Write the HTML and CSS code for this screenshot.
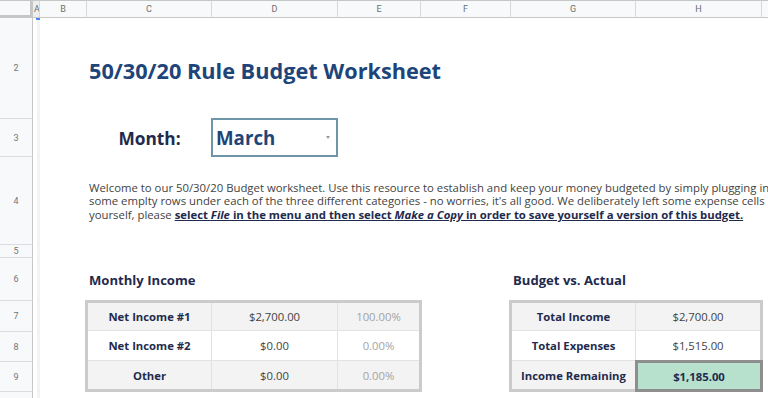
FILE: index.html
```html
<!DOCTYPE html>
<html lang="en">
<head>
<meta charset="utf-8">
<title>50/30/20 Rule Budget Worksheet</title>
<link rel="stylesheet" href="styles.css">
</head>
<body>
<div class="sheet">
  <div class="corner"></div>
  <div class="ch ch-a">A</div>
  <div class="ch">B</div>
  <div class="ch">C</div>
  <div class="ch">D</div>
  <div class="ch">E</div>
  <div class="ch">F</div>
  <div class="ch">G</div>
  <div class="ch">H</div>
  <div class="ch"></div>

  <div class="rh r2">2</div>
  <div class="rh r3">3</div>
  <div class="rh r4">4</div>
  <div class="rh r5">5</div>
  <div class="rh r6">6</div>
  <div class="rh r7">7</div>
  <div class="rh r8">8</div>
  <div class="rh r9">9</div>
  <div class="rh r10"></div>

  <div class="col-a"></div>

  <h1 class="title">50/30/20 Rule Budget Worksheet</h1>

  <div class="month-label">Month:</div>
  <div class="dropdown"><span class="dropdown-value">March</span><span class="caret"></span></div>

  <p class="intro">Welcome to our 50/30/20 Budget worksheet. Use this resource to establish and keep your money budgeted by simply plugging in<br>some emplty rows under each of the three different categories - no worries, it's all good. We deliberately left some expense cells<br>yourself, please <strong class="cta">select <em>File</em> in the menu and then select <em>Make a Copy</em> in order to save yourself a version of this budget.</strong></p>

  <h2 class="sect sect-income">Monthly Income</h2>
  <h2 class="sect sect-budget">Budget vs. Actual</h2>

  <div class="tbl tbl-income">
    <div class="cell lbl shade">Net Income #1</div>
    <div class="cell val shade">$2,700.00</div>
    <div class="cell pct shade">100.00%</div>
    <div class="cell lbl">Net Income #2</div>
    <div class="cell val">$0.00</div>
    <div class="cell pct">0.00%</div>
    <div class="cell lbl shade">Other</div>
    <div class="cell val shade">$0.00</div>
    <div class="cell pct shade">0.00%</div>
  </div>

  <div class="tbl tbl-budget">
    <div class="cell lbl shade">Total Income</div>
    <div class="cell val shade">$2,700.00</div>
    <div class="cell lbl">Total Expenses</div>
    <div class="cell val">$1,515.00</div>
    <div class="cell lbl shade">Income Remaining</div>
    <div class="cell val remain">$1,185.00</div>
  </div>
</div>
</body>
</html>
```

FILE: styles.css
```css
* { box-sizing: border-box; }

html, body {
  margin: 0;
  padding: 0;
  background: #ffffff;
}

body {
  width: 768px;
  height: 398px;
  overflow: hidden;
  font-family: "Open Sans", "Noto Sans", sans-serif;
}

.sheet {
  display: grid;
  grid-template-columns: 33px 7px 47px 125px 126px 83px 90px 125px 126px 7px;
  grid-template-rows: 18px 101px 38px 88px 13px 43px 31px 30px 30px 7px;
  width: 768px;
  height: 398px;
  overflow: hidden;
}

/* headers */
.corner {
  grid-column: 1;
  grid-row: 1;
  background: #f8f9fa;
  border-top: 1px solid #c4c7c5;
  border-right: 3px solid #c4c7c5;
  border-bottom: 3px solid #c4c7c5;
}

.ch {
  grid-row: 1;
  background: #f8f9fa;
  border-top: 1px solid #c4c7c5;
  border-bottom: 1px solid #c4c7c5;
  border-right: 1px solid #d6d8da;
  display: flex;
  align-items: center;
  justify-content: center;
  font-family: Roboto, "Liberation Sans", sans-serif;
  font-size: 9px;
  color: #6b6f73;
  overflow: hidden;
}

.ch-a {
  background: #eceef0;
  justify-content: flex-start;
  padding-left: 1px;
}

.rh {
  grid-column: 1;
  background: #f8f9fa;
  border-right: 1px solid #c4c7c5;
  border-bottom: 1px solid #dadce0;
  display: flex;
  align-items: center;
  justify-content: center;
  font-family: Roboto, "Liberation Sans", sans-serif;
  font-size: 9px;
  color: #70757a;
}

.r2 { grid-row: 2; }
.r3 { grid-row: 3; }
.r4 { grid-row: 4; }
.r5 { grid-row: 5; }
.r6 { grid-row: 6; }
.r7 { grid-row: 7; }
.r8 { grid-row: 8; }
.r9 { grid-row: 9; }
.r10 { grid-row: 10; border-bottom: 0; }

.col-a {
  grid-column: 2;
  grid-row: 2 / 11;
  background:
    linear-gradient(#4a86e8, #4a86e8) no-repeat 3px 0 / 4px 2px,
    linear-gradient(to right, #ffffff 0 4px, #f1f3f4 4px);
}

/* content */
.title {
  grid-column: 4 / -1;
  grid-row: 2;
  align-self: center;
  margin: 3px 0 0 0;
  padding-left: 2px;
  font-size: 21.7px;
  font-weight: 700;
  color: #1e4579;
  white-space: nowrap;
}

.month-label {
  grid-column: 4;
  grid-row: 3;
  align-self: center;
  text-align: center;
  font-size: 17.3px;
  font-weight: 700;
  color: #1f2b4d;
}

.dropdown {
  grid-column: 5;
  grid-row: 3;
  margin: -1px 0 0 -1px;
  border: 2px solid #6f95a9;
  display: flex;
  align-items: center;
  justify-content: space-between;
  padding: 0 6px 0 3px;
}

.dropdown-value {
  font-size: 18.7px;
  font-weight: 700;
  color: #1e4579;
}

.caret {
  width: 0;
  height: 0;
  border-left: 2.5px solid transparent;
  border-right: 2.5px solid transparent;
  border-top: 3px solid #9a9a9a;
}

.intro {
  grid-column: 4 / -1;
  grid-row: 4;
  align-self: center;
  margin: 0 -12px 0 0;
  padding-left: 2px;
  font-size: 11.35px;
  line-height: 13.5px;
  color: #434343;
  white-space: nowrap;
}

.cta {
  color: #1f2b4d;
  text-decoration: underline;
}

.sect {
  grid-row: 6;
  align-self: center;
  margin: 0;
  padding-left: 2px;
  font-size: 13.1px;
  font-weight: 700;
  color: #1f2b4d;
  white-space: nowrap;
}

.sect-income { grid-column: 4 / 7; }
.sect-budget { grid-column: 8 / 10; }

/* tables */
.tbl {
  grid-row: 7 / 10;
  display: grid;
  grid-template-rows: 28px 30px 1fr;
  border: 3px solid #cbcbcb;
  margin: -1px -1px 0 -2px;
}

.tbl-income {
  grid-column: 4 / 7;
  grid-template-columns: 124px 126px 1fr;
}

.tbl-budget {
  grid-column: 8 / 10;
  grid-template-columns: 124px 1fr;
}

.cell {
  display: flex;
  align-items: center;
  justify-content: center;
  font-size: 11.3px;
  border-right: 1px solid #e2e2e2;
  border-bottom: 1px solid #e2e2e2;
  white-space: nowrap;
}

.tbl-income .cell:nth-last-child(-n+3) { border-bottom: 0; }
.tbl-budget .cell:nth-last-child(-n+2) { border-bottom: 0; }

.shade { background: #f3f3f3; }

.lbl {
  font-weight: 700;
  color: #1f2b4d;
}

.val { color: #434343; }

.pct {
  color: #a3a3a3;
  border-right: 0;
}

.tbl-budget .val { border-right: 0; }

.remain {
  background: #b7e1cd;
  border: 3px solid #8e8e8e !important;
  margin: -1px -3px -3px -1px;
  font-weight: 700;
  color: #1f2b4d;
}
```
